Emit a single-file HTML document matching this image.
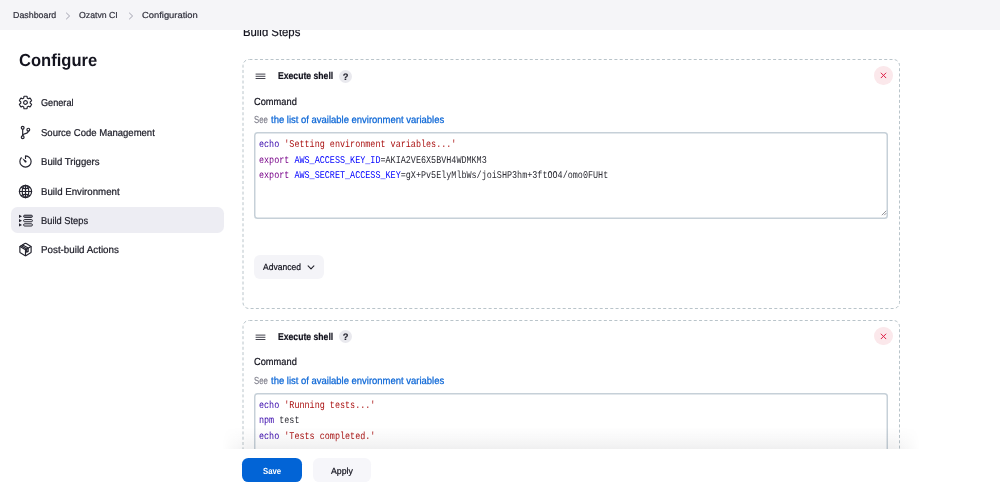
<!DOCTYPE html>
<html lang="en">
<head>
<meta charset="utf-8">
<title>Ozatvn CI Config [Jenkins]</title>
<style>
*{box-sizing:border-box;margin:0;padding:0}
html,body{width:1000px;height:491px;overflow:hidden;background:#fff}
body{will-change:transform;text-rendering:geometricPrecision;font-family:"Liberation Sans",Arial,sans-serif;color:#14141f;font-size:9.5px;position:relative}
#crumbs{position:absolute;left:0;top:0;width:1000px;height:30px;background:#f5f5f8;z-index:5}
#crumbs span{position:absolute;top:-0.2px;line-height:30px;font-size:9px;color:#30303c;white-space:nowrap;-webkit-text-stroke:0.2px #30303c}
#crumbs svg{position:absolute;top:11.5px}
h1{position:absolute;left:18.9px;top:46.7px;font-size:17px;line-height:26px;font-weight:700;color:#14141f;white-space:nowrap}
.nav{position:absolute;left:11px;width:213px;height:25.7px;border-radius:6.5px}
.nav.active{background:#ededf3}
.nav span{position:absolute;left:30px;top:1.6px;line-height:26px;font-size:9.6px;color:#1b1b26;white-space:nowrap}
.nav svg{position:absolute;left:7.1px;top:5.55px;width:15px;height:15px;color:#24242f;overflow:visible}
h2{position:absolute;left:242.6px;top:23.5px;font-size:11.4px;line-height:16px;font-weight:400;color:#14141f;white-space:nowrap;z-index:1}
.step{position:absolute;left:243.5px;width:655px}
.step>svg.bd{position:absolute;left:-1.5px;top:-1.2px;overflow:visible}
.in{position:absolute;left:0;width:100%;height:100%}
.step .drag{position:absolute;left:11px}
.step .ttl{position:absolute;left:34.5px;font-weight:700;font-size:9.2px;line-height:14px;color:#14141f;white-space:nowrap}
.step .q{position:absolute;width:13px;height:13px;border-radius:50%;background:#e9e9ee;font-size:9.4px;font-weight:700;line-height:13px;text-align:center;color:#2a2a35;-webkit-text-stroke:0.2px currentColor}
.step .x{position:absolute;width:18.5px;height:18.5px;border-radius:50%;background:#fbe8eb}
.step .x svg{position:absolute;left:0;top:0}
.step .lbl{position:absolute;left:10.8px;font-size:9.3px;line-height:14px;color:#14141f;white-space:nowrap}
.step .see{position:absolute;left:10.8px;font-size:9.36px;line-height:14px;color:#73737f;white-space:nowrap}
.step .see a{color:#0b66d4;text-decoration:none;position:absolute;left:17.1px;top:0}
.step .see .sw{position:absolute;left:0;top:0}
.ta{position:absolute;left:10.5px;width:634px;border-radius:3.5px;background:#fff;box-shadow:inset 0 0 0 1.5px #c6d0d8}
.ta svg{position:absolute;right:1.5px;bottom:2.8px}
.code{position:absolute;left:4.8px;top:6.6px;font-family:"Liberation Mono","DejaVu Sans Mono",monospace;font-size:10.3px;line-height:15.25px;color:#2b2b33;white-space:pre;transform:scaleX(0.819);transform-origin:0 0}
.ln{position:absolute;left:0;white-space:pre}
.k{color:#770088}.b{color:#3300aa}.s{color:#aa1111}.d{color:#0000ff}
.adv{position:absolute;left:10.3px;width:70px;height:23.4px;border-radius:6px;background:#f4f4f8;font-size:8.6px;line-height:23px;color:#14141f;}
.adv .at{position:absolute;left:9.4px;top:1px;line-height:23px}
.adv svg{position:absolute;left:52.9px;top:9.8px}
#shadow{position:absolute;left:222px;top:427px;width:698px;height:22px;background:linear-gradient(to bottom,rgba(10,10,20,0),rgba(10,10,20,.025) 45%,rgba(10,10,20,.062));-webkit-mask-image:linear-gradient(to right,transparent,#000 26px,#000 672px,transparent);mask-image:linear-gradient(to right,transparent,#000 26px,#000 672px,transparent);z-index:5}
#bar{position:absolute;left:0;top:449px;width:1000px;height:42px;background:#fff;z-index:6}
.btn{position:absolute;top:458.2px;height:23.6px;border-radius:6.3px;font-size:8.7px;line-height:23.6px;text-align:center;z-index:7;white-space:nowrap}
.btn span{position:absolute;top:1.9px;line-height:23.6px;left:0}
#save span{left:20.6px}
#apply span{left:18.4px;top:2.1px}
#save{left:242.4px;width:59.5px;background:#0264d6;color:#fff;font-weight:700;font-size:8.4px}
#apply{left:312.6px;width:58.8px;background:#f6f6fa;color:#14141f}
.nav span,.step .lbl,.step .adv,#apply,h2,.step .ttl{-webkit-text-stroke:0.22px currentColor}
.step .see a{-webkit-text-stroke:0.25px currentColor;color:#0b66d6}
.step .see .sw{color:#7d7d8a;-webkit-text-stroke:0.15px currentColor}
#crumbs span,h1,h2,.nav span,.step .ttl,.step .lbl,.step .see .sw,.step .see a,.adv .at,.btn span{transform-origin:0 50%}
/*FIT*/
#crumbs #c1{font-size:8.7px;transform:scaleX(1.0184)}
#crumbs #c2{font-size:8.7px;transform:scaleX(1.0045)}
#crumbs #c3{font-size:8.7px;transform:scaleX(1.0796)}
h1{font-size:17.4px;transform:scaleX(0.9522)}
#n1{font-size:10.0px;transform:scaleX(0.9135)}
#n2{font-size:10.0px;transform:scaleX(0.9521)}
#n3{font-size:10.0px;transform:scaleX(0.9584)}
#n4{font-size:10.0px;transform:scaleX(0.9685)}
#n5{font-size:10.0px;transform:scaleX(0.9309)}
#n6{font-size:10.0px;transform:scaleX(0.9799)}
h2{font-size:12.0px;transform:scaleX(0.9439)}
.step .ttl{font-size:10.0px;transform:scaleX(0.8636)}
.step .lbl{font-size:10.2px;transform:scaleX(0.9106)}
.step .see .sw{font-size:10.2px;transform:scaleX(0.7607)}
.step .see a{font-size:10.2px;transform:scaleX(0.9296)}
.step .adv .at{font-size:9.1px;transform:scaleX(0.9369)}
#save span{font-size:8.8px;transform:scaleX(0.8809)}
#apply span{font-size:8.9px;transform:scaleX(0.9863)}
/*ENDFIT*/
</style>
</head>
<body>
<div id="crumbs">
  <span id="c1" style="left:12.5px">Dashboard</span>
  <svg style="left:65px" width="6" height="8" viewBox="0 0 6 8"><path d="M1.2 0.8 L4.6 4 L1.2 7.2" fill="none" stroke="#9a9aa8" stroke-width="0.9"/></svg>
  <span id="c2" style="left:79.2px">Ozatvn CI</span>
  <svg style="left:127.5px" width="6" height="8" viewBox="0 0 6 8"><path d="M1.2 0.8 L4.6 4 L1.2 7.2" fill="none" stroke="#9a9aa8" stroke-width="0.9"/></svg>
  <span id="c3" style="left:141.8px">Configuration</span>
</div>

<h1>Configure</h1>

<div class="nav" style="top:89.95px"><svg viewBox="0 0 512 512"><path fill="none" stroke="currentColor" stroke-linecap="round" stroke-linejoin="round" stroke-width="40" d="M262.29 192.31a64 64 0 1057.4 57.4 64.13 64.13 0 00-57.4-57.4zM416.39 256a154.34 154.34 0 01-1.53 20.79l45.21 35.46a10.81 10.81 0 012.45 13.75l-42.77 74a10.81 10.81 0 01-13.14 4.59l-44.9-18.08a16.11 16.11 0 00-15.17 1.75A164.48 164.48 0 01325 400.8a15.94 15.94 0 00-8.82 12.14l-6.73 47.89a11.08 11.08 0 01-10.68 9.17h-85.54a11.11 11.11 0 01-10.69-8.87l-6.72-47.82a16.07 16.07 0 00-9-12.22 155.3 155.3 0 01-21.46-12.57 16 16 0 00-15.11-1.71l-44.89 18.07a10.81 10.81 0 01-13.14-4.58l-42.77-74a10.8 10.8 0 012.45-13.75l38.21-30a16.05 16.05 0 006-14.08c-.36-4.17-.58-8.33-.58-12.5s.21-8.27.58-12.35a16 16 0 00-6.07-13.94l-38.19-30A10.81 10.81 0 0149.48 186l42.77-74a10.81 10.81 0 0113.14-4.59l44.9 18.08a16.11 16.11 0 0015.17-1.75A164.48 164.48 0 01187 111.2a15.94 15.94 0 008.82-12.14l6.73-47.89A11.08 11.08 0 01213.23 42h85.54a11.11 11.11 0 0110.69 8.87l6.72 47.82a16.07 16.07 0 009 12.22 155.3 155.3 0 0121.46 12.57 16 16 0 0015.11 1.71l44.89-18.07a10.81 10.81 0 0113.14 4.58l42.77 74a10.8 10.8 0 01-2.45 13.75l-38.21 30a16.05 16.05 0 00-6.05 14.08c.33 4.14.55 8.3.55 12.47z"/></svg><span id="n1" style="top:1.1px">General</span></div>
<div class="nav" style="top:119.3px"><svg viewBox="0 0 512 512"><circle cx="160" cy="96" r="48" fill="none" stroke="currentColor" stroke-linecap="round" stroke-linejoin="round" stroke-width="40"/><circle cx="160" cy="416" r="48" fill="none" stroke="currentColor" stroke-linecap="round" stroke-linejoin="round" stroke-width="40"/><path d="M160 368V144" fill="none" stroke="currentColor" stroke-linecap="round" stroke-linejoin="round" stroke-width="40"/><circle cx="352" cy="160" r="48" fill="none" stroke="currentColor" stroke-linecap="round" stroke-linejoin="round" stroke-width="40"/><path d="M352 208c0 128-192 48-192 160" fill="none" stroke="currentColor" stroke-linecap="round" stroke-linejoin="round" stroke-width="40"/></svg><span id="n2">Source Code Management</span></div>
<div class="nav" style="top:148.65px"><svg viewBox="0 0 512 512"><path fill="none" stroke="currentColor" stroke-linecap="round" stroke-linejoin="round" stroke-width="40" d="M112.91 128A191.85 191.85 0 0064 254c-1.18 106.35 85.65 193.8 192 194 106.2.2 192-85.83 192-192 0-104.54-83.55-189.61-187.5-192a4.36 4.36 0 00-4.5 4.37V152"/><path fill="currentColor" d="M233.38 278.63l-79-113a8.13 8.13 0 0111.32-11.32l113 79a32.5 32.5 0 01-37.25 53.26 33.21 33.21 0 01-8.07-7.94z"/></svg><span id="n3">Build Triggers</span></div>
<div class="nav" style="top:178.0px"><svg viewBox="0 0 512 512"><path fill="none" stroke="currentColor" stroke-linecap="round" stroke-linejoin="round" stroke-width="40" d="M256 48C141.13 48 48 141.13 48 256s93.13 208 208 208 208-93.13 208-208S370.87 48 256 48z"/><path fill="none" stroke="currentColor" stroke-linecap="round" stroke-linejoin="round" stroke-width="40" d="M256 48c-58.07 0-112.67 93.13-112.67 208S197.93 464 256 464s112.67-93.13 112.67-208S314.070 48 256 48z"/><path fill="none" stroke="currentColor" stroke-linecap="round" stroke-linejoin="round" stroke-width="40" d="M117.33 117.33c38.24 27.15 86.38 43.34 138.67 43.34s100.43-16.19 138.67-43.34M394.67 394.67c-38.24-27.15-86.38-43.34-138.67-43.34s-100.43 16.19-138.67 43.34"/><path fill="none" stroke="currentColor" stroke-linecap="round" stroke-linejoin="round" stroke-width="40" d="M256 48v416M464 256H48"/></svg><span id="n4">Build Environment</span></div>
<div class="nav active" style="top:207.3px"><svg viewBox="0 0 15 15" style="left:7.9px;top:6.6px;width:15px;height:15px"><g stroke="currentColor" stroke-width="1" fill="none"><rect x="4.6" y="1.2" width="8.8" height="2.2" rx="1.1" fill="#8e8e99"/><rect x="4.6" y="5.55" width="8.8" height="2.2" rx="1.1"/><rect x="4.6" y="9.8" width="8.8" height="2.2" rx="1.1"/></g><path fill="currentColor" d="M0 0.7l3 1.6-3 1.6zM0 5.05l3 1.6-3 1.6zM0 9.3l3 1.6-3 1.6z"/></svg><span id="n5">Build Steps</span></div>
<div class="nav" style="top:236.65px"><svg viewBox="0 0 512 512"><path fill="none" stroke="currentColor" stroke-linecap="round" stroke-linejoin="round" stroke-width="40" d="M448 341.37V170.61A32 32 0 00432.110 143l-152-88.460a47.940 47.940 0 00-48.240 0L79.890 143A32 32 0 0064 170.610v170.760A32 32 0 0079.890 369l152 88.460a48 48 0 0048.240 0l152-88.460A32 32 0 00448 341.370z"/><path fill="none" stroke="currentColor" stroke-linecap="round" stroke-linejoin="round" stroke-width="40" d="M69 153.990l187 110 187-110M256 463.990v-200"/><path fill="none" stroke="currentColor" stroke-linecap="round" stroke-linejoin="round" stroke-width="40" d="M160 100l187 108v112l-52 30v-112L108 130"/></svg><span id="n6">Post-build Actions</span></div>

<h2>Build Steps</h2>

<div class="step" style="top:60.2px;height:247px"><svg class="bd" width="658" height="250" viewBox="0 0 658 250"><rect x="1" y="0.5" width="656.5" height="249" rx="6" fill="none" stroke="#b9c4ca" stroke-width="1" stroke-dasharray="3 2.29" stroke-dashoffset="-0.4"/></svg>
  <svg class="drag" style="top:13.2px" width="11" height="7" viewBox="0 0 11 7"><path d="M0.6 1.1h9.8M0.6 3.3h9.8M0.6 5.5h9.8" stroke="#3a3a45" stroke-width="0.95" fill="none"/></svg>
  <div class="ttl" style="top:10px">Execute shell</div>
  <div class="q" style="left:95.7px;top:9.7px">?</div>
  <div class="x" style="left:630.5px;top:6px"><svg width="18.5" height="18.5" viewBox="0 0 18.5 18.5"><path d="M6.85 6.75l5.3 5.3M12.15 6.75l-5.3 5.3" stroke="#de2048" stroke-width="1" fill="none"/></svg></div>
  <div class="lbl" style="top:35.4px">Command</div>
  <div class="see" style="top:53.9px"><span class="sw">See</span><a>the list of available environment variables</a></div>
  <div class="ta" style="top:71.8px;height:87px"><div class="code"><div class="ln" style="top:-0.8px"><span class="b">echo</span> <span class="s">'Setting environment variables...'</span></div><div class="ln" style="top:15.25px"><span class="k">export</span> <span class="d">AWS_ACCESS_KEY_ID</span>=AKIA2VE6X5BVH4WDMKM3</div><div class="ln" style="top:30.5px"><span class="k">export</span> <span class="d">AWS_SECRET_ACCESS_KEY</span>=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</div></div><svg width="6" height="6" viewBox="0 0 6 6"><path d="M5.2 0.8L0.8 5.2M5.2 3.2L3.2 5.2" stroke="#77777f" stroke-width="0.8" fill="none"/></svg></div>
  <div class="adv" style="top:195px"><span class="at">Advanced</span><svg width="8" height="5" viewBox="0 0 8 5"><path d="M1.1 0.9L4 3.8L6.9 0.9" fill="none" stroke="#22222c" stroke-width="1.1" stroke-linecap="round" stroke-linejoin="round"/></svg></div>
</div>

<div class="step" style="top:321.3px;height:247px"><svg class="bd" style="top:-1.3px" width="658" height="250" viewBox="0 0 658 250"><rect x="1" y="0.5" width="656.5" height="249" rx="6" fill="none" stroke="#b9c4ca" stroke-width="1" stroke-dasharray="3 2.29" stroke-dashoffset="-0.4"/></svg><div class="in" style="top:-0.5px">
  <svg class="drag" style="top:13.2px" width="11" height="7" viewBox="0 0 11 7"><path d="M0.6 1.1h9.8M0.6 3.3h9.8M0.6 5.5h9.8" stroke="#3a3a45" stroke-width="0.95" fill="none"/></svg>
  <div class="ttl" style="top:10px">Execute shell</div>
  <div class="q" style="left:95.7px;top:9.7px">?</div>
  <div class="x" style="left:630.5px;top:6px"><svg width="18.5" height="18.5" viewBox="0 0 18.5 18.5"><path d="M6.85 6.75l5.3 5.3M12.15 6.75l-5.3 5.3" stroke="#de2048" stroke-width="1" fill="none"/></svg></div>
  <div class="lbl" style="top:35.4px">Command</div>
  <div class="see" style="top:53.9px"><span class="sw">See</span><a>the list of available environment variables</a></div>
  <div class="ta" style="top:71.8px;height:87px"><div class="code"><div class="ln" style="top:0px"><span class="b">echo</span> <span class="s">'Running tests...'</span></div><div class="ln" style="top:15.25px"><span class="b">npm</span> test</div><div class="ln" style="top:30.5px"><span class="b">echo</span> <span class="s">'Tests completed.'</span></div></div></div>
</div></div>

<div id="shadow"></div>
<div id="bar"></div>
<div class="btn" id="save"><span>Save</span></div>
<div class="btn" id="apply"><span>Apply</span></div>
</body>
</html>
